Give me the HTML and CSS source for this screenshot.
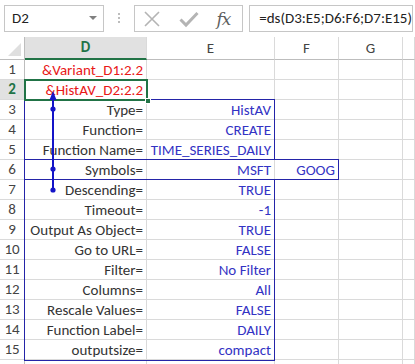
FILE: index.html
```html
<!DOCTYPE html>
<html lang="en">
<head>
    <meta charset="UTF-8">
    <title>ds formula</title>
    <link rel="stylesheet" href="styles.css">
</head>
<body>
    <div class="formula-bar">
        <div class="name-box">
            <span>D2</span>
            <span class="name-arrow"></span>
        </div>
        <div class="grip"><i></i><i></i><i></i></div>
        <div class="fx-buttons">
            <svg class="btn-cancel" width="18" height="18" viewBox="0 0 18 18">
                <path d="M2 2 L16 16 M16 2 L2 16" stroke="#b4b4b4" stroke-width="1.6" fill="none"/>
            </svg>
            <svg class="btn-enter" width="20" height="18" viewBox="0 0 20 18">
                <path d="M1.5 9.5 L7 15 L18.5 3" stroke="#b4b4b4" stroke-width="3" fill="none"/>
            </svg>
            <span class="btn-fx">fx</span>
        </div>
        <div class="formula-input">=ds(D3:E5;D6:F6;D7:E15)</div>
    </div>

    <div class="sheet">
        <div class="grid">
            <div class="corner"><span class="corner-tri"></span></div>
            <div class="col-head active">D</div>
            <div class="col-head">E</div>
            <div class="col-head">F</div>
            <div class="col-head">G</div>
            <div class="col-head"></div>

            <div class="row-head">1</div>
            <div class="cell red">&amp;Variant_D1:2.2</div>
            <div class="cell"></div><div class="cell"></div><div class="cell"></div><div class="cell"></div>

            <div class="row-head active">2</div>
            <div class="cell red">&amp;HistAV_D2:2.2</div>
            <div class="cell"></div><div class="cell"></div><div class="cell"></div><div class="cell"></div>

            <div class="row-head">3</div>
            <div class="cell">Type=</div>
            <div class="cell val">HistAV</div>
            <div class="cell"></div><div class="cell"></div><div class="cell"></div>

            <div class="row-head">4</div>
            <div class="cell">Function=</div>
            <div class="cell val">CREATE</div>
            <div class="cell"></div><div class="cell"></div><div class="cell"></div>

            <div class="row-head">5</div>
            <div class="cell">Function Name=</div>
            <div class="cell val">TIME_SERIES_DAILY</div>
            <div class="cell"></div><div class="cell"></div><div class="cell"></div>

            <div class="row-head">6</div>
            <div class="cell">Symbols=</div>
            <div class="cell val">MSFT</div>
            <div class="cell val">GOOG</div>
            <div class="cell"></div><div class="cell"></div>

            <div class="row-head">7</div>
            <div class="cell">Descending=</div>
            <div class="cell val">TRUE</div>
            <div class="cell"></div><div class="cell"></div><div class="cell"></div>

            <div class="row-head">8</div>
            <div class="cell">Timeout=</div>
            <div class="cell val">-1</div>
            <div class="cell"></div><div class="cell"></div><div class="cell"></div>

            <div class="row-head">9</div>
            <div class="cell">Output As Object=</div>
            <div class="cell val">TRUE</div>
            <div class="cell"></div><div class="cell"></div><div class="cell"></div>

            <div class="row-head">10</div>
            <div class="cell">Go to URL=</div>
            <div class="cell val">FALSE</div>
            <div class="cell"></div><div class="cell"></div><div class="cell"></div>

            <div class="row-head">11</div>
            <div class="cell">Filter=</div>
            <div class="cell val">No Filter</div>
            <div class="cell"></div><div class="cell"></div><div class="cell"></div>

            <div class="row-head">12</div>
            <div class="cell">Columns=</div>
            <div class="cell val">All</div>
            <div class="cell"></div><div class="cell"></div><div class="cell"></div>

            <div class="row-head">13</div>
            <div class="cell">Rescale Values=</div>
            <div class="cell val">FALSE</div>
            <div class="cell"></div><div class="cell"></div><div class="cell"></div>

            <div class="row-head">14</div>
            <div class="cell">Function Label=</div>
            <div class="cell val">DAILY</div>
            <div class="cell"></div><div class="cell"></div><div class="cell"></div>

            <div class="row-head">15</div>
            <div class="cell">outputsize=</div>
            <div class="cell val">compact</div>
            <div class="cell"></div><div class="cell"></div><div class="cell"></div>

            <div class="row-head"></div>
            <div class="cell"></div><div class="cell"></div><div class="cell"></div><div class="cell"></div><div class="cell"></div>
        </div>

        <!-- precedent ranges D3:E5, D6:F6, D7:E15 -->
        <div class="range range-params"></div>
        <div class="range range-symbols"></div>
        <div class="range range-options"></div>

        <!-- active cell D2 -->
        <div class="selection"><span class="fill-handle"></span></div>

        <!-- trace precedents arrow -->
        <svg class="trace" width="20" height="110" viewBox="0 0 20 110">
            <line x1="9" y1="8" x2="9" y2="103" stroke="#1414c8" stroke-width="2"/>
            <polygon points="9,4 5.5,13 12.5,13" fill="#1414c8"/>
            <circle cx="9" cy="22" r="2.6" fill="#1414c8"/>
            <circle cx="9" cy="82" r="2.6" fill="#1414c8"/>
            <circle cx="9" cy="103" r="2.6" fill="#1414c8"/>
        </svg>
    </div>
</body>
</html>
```

FILE: styles.css
```css
* {
    margin: 0;
    padding: 0;
    box-sizing: border-box;
}

html, body {
    width: 100%;
    height: 100%;
    overflow: hidden;
}

body {
    background-color: #fff;
    font-family: "Carlito", "Lato", "Liberation Sans", sans-serif;
    font-size: 15px;
    color: #333;
}

/* formula bar */
.formula-bar {
    display: flex;
    align-items: flex-start;
    height: 37px;
    padding: 5px 0 0 4px;
}

.name-box {
    position: relative;
    width: 101px;
    height: 27px;
    border: 1px solid #c6c6c6;
    padding-left: 7px;
    line-height: 25px;
    color: #222;
    font-size: 15px;
}

.name-arrow {
    position: absolute;
    right: 6px;
    top: 10px;
    width: 0;
    height: 0;
    border-left: 4px solid transparent;
    border-right: 4px solid transparent;
    border-top: 4px solid #808080;
}

.grip {
    display: flex;
    flex-direction: column;
    gap: 2px;
    width: 31px;
    padding-top: 8px;
    align-items: center;
}

.grip i {
    display: block;
    width: 2px;
    height: 2px;
    background-color: #bdbdbd;
}

.fx-buttons {
    display: flex;
    align-items: center;
    width: 110px;
    height: 27px;
    border: 1px solid #c6c6c6;
    padding-left: 8px;
}

.btn-enter {
    margin-left: 18px;
}

.btn-fx {
    margin-left: 17px;
    font-family: "DejaVu Serif", "Liberation Serif", serif;
    font-style: italic;
    font-size: 17px;
    color: #606060;
    letter-spacing: -1px;
}

.formula-input {
    flex: 1;
    margin-left: 6px;
    margin-right: 2px;
    height: 27px;
    border: 1px solid #c6c6c6;
    padding-left: 9px;
    line-height: 25px;
    color: #222;
}

/* sheet */
.sheet {
    position: relative;
}

.grid {
    display: grid;
    grid-template-columns: 25px 122px 128px 64px 64px 1fr;
    grid-template-rows: 23px repeat(16, 20px);
}

.grid > div {
    border-right: 1px solid #dadada;
    border-bottom: 1px solid #dadada;
}

.corner {
    position: relative;
    border-color: #bdbdbd !important;
}

.corner-tri {
    position: absolute;
    right: 3px;
    bottom: 3px;
    width: 0;
    height: 0;
    border-left: 13px solid transparent;
    border-bottom: 13px solid #dfdfdf;
}

.col-head {
    text-align: center;
    line-height: 22px;
    color: #444;
    border-bottom-color: #bdbdbd !important;
}

.col-head.active {
    background-color: #e1e1e1;
    color: #217346;
    font-weight: bold;
    border-bottom: 2px solid #217346 !important;
    line-height: 21px;
}

.row-head {
    text-align: center;
    line-height: 19px;
    color: #444;
    border-right-color: #bdbdbd !important;
}

.row-head.active {
    background-color: #e1e1e1;
    color: #217346;
    font-weight: bold;
}

.cell {
    text-align: right;
    padding-right: 3px;
    line-height: 20px;
    white-space: nowrap;
    overflow: visible;
}

.cell.red {
    color: #e81818;
}

.cell.val {
    color: #3333c4;
}

/* overlays */
.range {
    position: absolute;
    left: 24px;
    border: 1px solid #2424a8;
}

.range-params {
    top: 62px;
    width: 251px;
    height: 61px;
}

.range-symbols {
    top: 122px;
    width: 315px;
    height: 21px;
}

.range-options {
    top: 142px;
    width: 251px;
    height: 182px;
}

.selection {
    position: absolute;
    left: 24px;
    top: 42px;
    width: 124px;
    height: 22px;
    border: 2px solid #217346;
}

.fill-handle {
    position: absolute;
    right: -5px;
    bottom: -5px;
    width: 6px;
    height: 6px;
    background-color: #217346;
    border: 1px solid #fff;
}

.trace {
    position: absolute;
    left: 44px;
    top: 50px;
}
```
